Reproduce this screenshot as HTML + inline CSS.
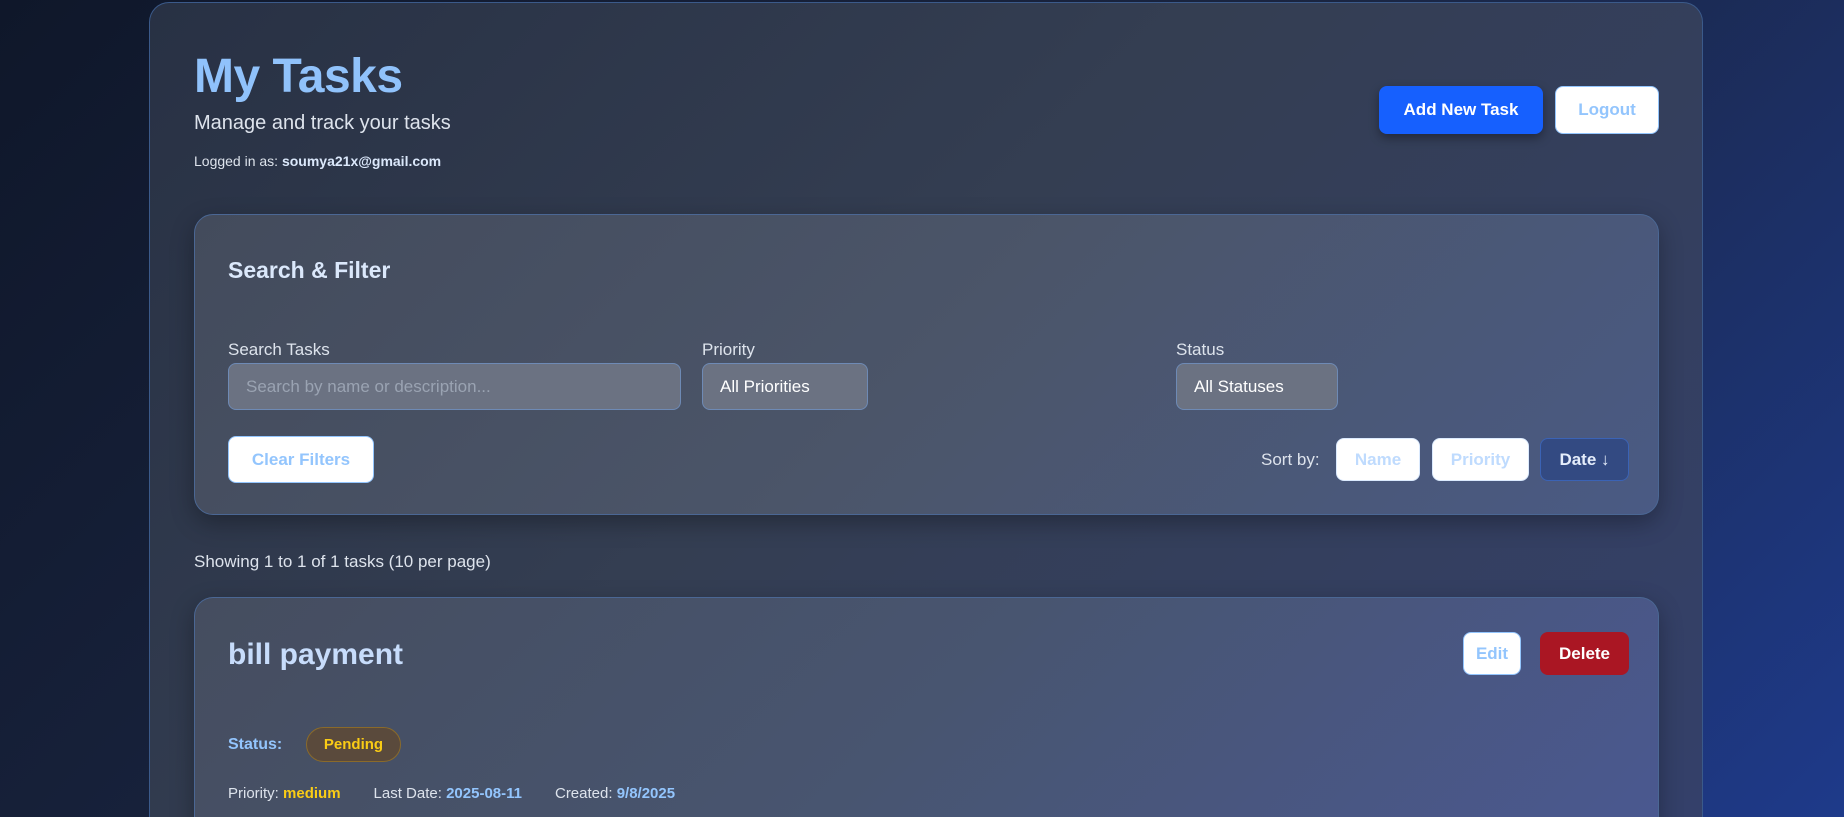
<!DOCTYPE html>
<html><head><meta charset="utf-8"><style>
*{box-sizing:border-box;margin:0;padding:0}
html,body{width:1844px;height:817px;overflow:hidden}
body{font-family:"Liberation Sans",sans-serif;background:#0f172a}
.wrap{position:relative;width:1844px;height:817px;overflow:hidden;background:linear-gradient(135deg,#0f172a 0%,#1a2541 50%,#1e3a8a 100%)}
.main{position:absolute;left:149px;top:2px;width:1554px;height:815px;border-radius:20px 20px 0 0;border:1px solid #3b5a8a;border-bottom:none;background:linear-gradient(135deg,#283144 0%,#343e52 45%,#34406a 100%);overflow:hidden}
.abs{position:absolute}
h1{position:absolute;left:44px;top:46px;font-size:48px;font-weight:bold;color:#90c2fb;letter-spacing:-0.5px}
.sub{left:44px;top:109px;font-size:20px;color:#dde3ec}
.log{left:44px;top:150px;font-size:14px;color:#dde3ec}
.log b{color:#dbe8fb}
.btn{position:absolute;border-radius:8px;font-size:17px;font-weight:bold;display:flex;align-items:center;justify-content:center}
.w{background:#fff;color:#93c5fd;border:1px solid #93c5fd}
.card{position:absolute;left:44px;width:1465px;border-radius:19px;border:1px solid #4b6794;background:linear-gradient(135deg,#434b5c 0%,#4b5569 50%,#4a5a84 100%);box-shadow:0 8px 24px rgba(0,0,0,.3)}
.lbl{font-size:17px;color:#dde3ec;top:125px}
.inp{position:absolute;top:148px;height:47px;border-radius:8px;background:#6b7282;border:1px solid #6e8ab5;font-size:17px;color:#fff;display:flex;align-items:center;padding-left:17px}
</style></head><body><div class="wrap">
<div class="main">
<h1>My Tasks</h1>
<div class="abs sub">Manage and track your tasks</div>
<div class="abs log">Logged in as: <b>soumya21x@gmail.com</b></div>
<div class="btn" style="left:1229px;top:83px;width:164px;height:48px;background:#1660fe;color:#fff;box-shadow:0 4px 10px rgba(0,0,0,.35)">Add New Task</div>
<div class="btn w" style="left:1405px;top:83px;width:104px;height:48px">Logout</div>

<div class="card" style="top:211px;height:301px">
<div class="abs" style="left:33px;top:42px;font-size:23px;font-weight:bold;color:#dbe8fb">Search &amp; Filter</div>
<div class="abs lbl" style="left:33px">Search Tasks</div>
<div class="abs lbl" style="left:507px">Priority</div>
<div class="abs lbl" style="left:981px">Status</div>
<div class="inp" style="left:33px;width:453px;color:#9aa3b2">Search by name or description...</div>
<div class="inp" style="left:507px;width:166px">All Priorities</div>
<div class="inp" style="left:981px;width:162px">All Statuses</div>
<div class="btn w" style="left:33px;top:221px;width:146px;height:47px">Clear Filters</div>
<div class="abs" style="left:1066px;top:235px;font-size:17px;color:#dde3ec">Sort by:</div>
<div class="btn w" style="left:1141px;top:223px;width:84px;height:43px;color:#bfdbfe;border-color:#dbeafe">Name</div>
<div class="btn w" style="left:1237px;top:223px;width:97px;height:43px;color:#bfdbfe;border-color:#dbeafe">Priority</div>
<div class="btn" style="left:1345px;top:223px;width:89px;height:43px;background:#334a82;border:1px solid #3b63b5;color:#e5edfb">Date ↓</div>
</div>

<div class="abs" style="left:44px;top:549px;font-size:17px;color:#dde3ec">Showing 1 to 1 of 1 tasks (10 per page)</div>

<div class="card" style="top:594px;height:230px;border-bottom:none;border-radius:19px 19px 0 0;background:linear-gradient(135deg,#454d5f 0%,#485570 50%,#4a5890 100%)">
<div class="abs" style="left:33px;top:40px;font-size:30px;font-weight:bold;color:#c7dcfb">bill payment</div>
<div class="btn w" style="left:1268px;top:34px;width:58px;height:43px">Edit</div>
<div class="btn" style="left:1345px;top:34px;width:89px;height:43px;background:#aa1623;color:#fff">Delete</div>
<div class="abs" style="left:33px;top:138px;font-size:16px;font-weight:bold;color:#93c5fd">Status:</div>
<div class="abs" style="left:111px;top:129px;width:95px;height:35px;border-radius:18px;background:#5a4a3c;border:1px solid #8a6a2a;color:#facc15;font-size:15px;font-weight:bold;display:flex;align-items:center;justify-content:center">Pending</div>
<div class="abs" style="left:33px;top:187px;font-size:15px;color:#dde3ec">Priority: <b style="color:#facc15">medium</b><span style="display:inline-block;width:33px"></span>Last Date: <b style="color:#93c5fd">2025-08-11</b><span style="display:inline-block;width:33px"></span>Created: <b style="color:#93c5fd">9/8/2025</b></div>
</div>
</div>
</div></body></html>
